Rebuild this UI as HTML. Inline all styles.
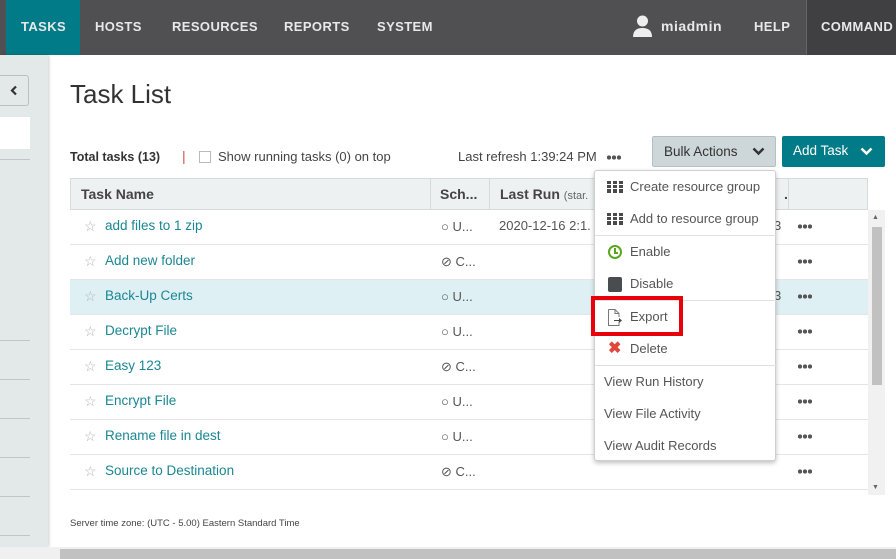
<!DOCTYPE html>
<html><head><style>
*{margin:0;padding:0;box-sizing:border-box}
body{width:896px;height:559px;overflow:hidden;position:relative;font-family:"Liberation Sans",sans-serif;background:#fff;color:#333}
.a{position:absolute}
.nav{left:0;top:0;width:896px;height:55px;background:#505052}
.nv{top:0;height:55px;line-height:53px;color:#e8e8e8;font-weight:bold;font-size:13px;letter-spacing:.4px}
.side{left:0;top:55px;width:48px;height:492px;background:#e3e8e8;box-shadow:1px 0 3px rgba(0,0,0,.2)}
.sl{left:0;width:30px;height:1px;background:#bfc6c7}
.row{left:70px;width:798px;height:35px;border-bottom:1px solid #e3e6e7}
.tn{left:35px;top:8px;color:#1a8792;font-size:13.5px}
.st{left:14px;top:8px;color:#b0b5b7;font-size:14px}
.sc{left:371px;top:9px;font-size:13px;color:#555}
.dt{left:728px;top:14px;width:14px;height:5px;background:radial-gradient(circle at 2px 2.5px,#555 2px,transparent 2.3px) 0 0/5px 5px repeat-x}
.mi{left:0;width:182px;height:32px;line-height:32px;font-size:13px;color:#555}
.mi span{position:absolute;left:35px}
.sep{left:0;width:182px;height:1px;background:#e0e0e0}
.grid{position:absolute;left:12px;top:10px;width:16px;height:12px;background:
repeating-linear-gradient(90deg,#4a4a4a 0 4px,transparent 4px 6px);}
.grid:after{content:"";position:absolute;left:0;top:3px;width:16px;height:1px;background:#fff;box-shadow:0 4px 0 #fff}
</style></head><body>
<div class="a nav"></div>
<div class="a" style="left:6px;top:0;width:74px;height:55px;background:#007b87"></div>
<div class="a nv" style="left:21px">TASKS</div>
<div class="a nv" style="left:95px">HOSTS</div>
<div class="a nv" style="left:172px">RESOURCES</div>
<div class="a nv" style="left:284px">REPORTS</div>
<div class="a nv" style="left:377px">SYSTEM</div>
<svg class="a" style="left:633px;top:15px" width="19" height="23" viewBox="0 0 19 23"><circle cx="9.5" cy="6" r="5.5" fill="#eee"/><path d="M0 22 Q0 13 9.5 13 Q19 13 19 22Z" fill="#eee"/></svg>
<div class="a nv" style="left:661px;font-size:14px;letter-spacing:.5px">miadmin</div>
<div class="a nv" style="left:754px">HELP</div>
<div class="a" style="left:806px;top:0;width:90px;height:55px;background:#404042;border-left:1px solid #666"></div>
<div class="a nv" style="left:821px">COMMAND</div>

<div class="a side"></div>
<div class="a" style="left:-4px;top:75px;width:33px;height:31px;border:1px solid #b9c0c1;border-radius:3px;background:#e3e8e8"></div>
<svg class="a" style="left:10px;top:85px" width="8" height="11" viewBox="0 0 8 11"><path d="M6 1.5L2 5.5l4 4" fill="none" stroke="#333" stroke-width="2.2"/></svg>
<div class="a" style="left:0;top:117px;width:30px;height:32px;background:#fff"></div>
<div class="a sl" style="top:159px"></div><div class="a sl" style="top:340px"></div><div class="a sl" style="top:379px"></div><div class="a sl" style="top:418px"></div><div class="a sl" style="top:457px"></div><div class="a sl" style="top:496px"></div><div class="a sl" style="top:535px"></div>

<div class="a" style="left:70px;top:79px;font-size:26px;color:#333">Task List</div>
<div class="a" style="left:70px;top:150px;font-size:12.5px;font-weight:bold;color:#333">Total tasks (13)</div>
<div class="a" style="left:182px;top:148px;font-size:14px;color:#c55">|</div>
<div class="a" style="left:199px;top:151px;width:12px;height:12px;border:1px solid #bbb"></div>
<div class="a" style="left:218px;top:149px;font-size:13px;color:#444">Show running tasks (0) on top</div>
<div class="a" style="left:458px;top:149px;font-size:13px;color:#444">Last refresh 1:39:24 PM</div>
<div class="a dt" style="left:607px;top:155px"></div>
<div class="a" style="left:652px;top:136px;width:124px;height:31px;background:#cdd6d9;border:1px solid #b5c0c3;border-radius:2px;font-size:13.5px;color:#333;line-height:29px;padding-left:11px">Bulk Actions</div>
<svg class="a" style="left:752px;top:147px" width="13" height="9" viewBox="0 0 13 9"><path d="M1.5 1.5l5 5 5-5" fill="none" stroke="#333" stroke-width="2.5"/></svg>
<div class="a" style="left:782px;top:136px;width:103px;height:31px;background:#007b87;border-radius:2px;font-size:13.5px;color:#fff;line-height:30px;padding-left:11px">Add Task</div>
<svg class="a" style="left:860px;top:147px" width="13" height="9" viewBox="0 0 13 9"><path d="M1.5 1.5l5 5 5-5" fill="none" stroke="#fff" stroke-width="2.5"/></svg>

<div class="a" style="left:70px;top:178px;width:798px;height:32px;background:#eef1f2;border:1px solid #d5dadc"></div>
<div class="a" style="left:430px;top:178px;width:1px;height:32px;background:#d5dadc"></div>
<div class="a" style="left:489px;top:178px;width:1px;height:32px;background:#d5dadc"></div>
<div class="a" style="left:788px;top:178px;width:1px;height:32px;background:#d5dadc"></div>
<div class="a" style="left:81px;top:186px;font-size:14px;font-weight:bold;color:#444">Task Name</div>
<div class="a" style="left:440px;top:186px;font-size:14px;font-weight:bold;color:#444">Sch...</div>
<div class="a" style="left:500px;top:186px;font-size:14px;font-weight:bold;color:#444">Last Run <span style="font-size:11px;font-weight:normal;color:#666">(star.</span></div>
<div class="a" style="left:784px;top:186px;font-size:14px;font-weight:bold;color:#444">.</div>

<div class="a row" style="top:210px"><div class="a st">&#9734;</div><div class="a tn">add files to 1 zip</div><div class="a sc">&#9675; U...</div><div class="a" style="left:429px;top:8px;font-size:13px;color:#555">2020-12-16 2:1.</div><div class="a" style="left:704px;top:8px;font-size:13px;color:#555">3</div><div class="a dt"></div></div>
<div class="a row" style="top:245px"><div class="a st">&#9734;</div><div class="a tn">Add new folder</div><div class="a sc">&#8856; C...</div><div class="a dt"></div></div>
<div class="a row" style="top:280px;background:#dff0f5"><div class="a st">&#9734;</div><div class="a tn">Back-Up Certs</div><div class="a sc">&#9675; U...</div><div class="a" style="left:704px;top:8px;font-size:13px;color:#555">3</div><div class="a dt"></div></div>
<div class="a row" style="top:315px"><div class="a st">&#9734;</div><div class="a tn">Decrypt File</div><div class="a sc">&#9675; U...</div><div class="a dt"></div></div>
<div class="a row" style="top:350px"><div class="a st">&#9734;</div><div class="a tn">Easy 123</div><div class="a sc">&#8856; C...</div><div class="a dt"></div></div>
<div class="a row" style="top:385px"><div class="a st">&#9734;</div><div class="a tn">Encrypt File</div><div class="a sc">&#9675; U...</div><div class="a dt"></div></div>
<div class="a row" style="top:420px"><div class="a st">&#9734;</div><div class="a tn">Rename file in dest</div><div class="a sc">&#9675; U...</div><div class="a dt"></div></div>
<div class="a row" style="top:455px"><div class="a st">&#9734;</div><div class="a tn">Source to Destination</div><div class="a sc">&#8856; C...</div><div class="a dt"></div></div>

<div class="a" style="left:868px;top:210px;width:17px;height:285px;background:#f1f1f1"></div>
<div class="a" style="left:872px;top:227px;width:10px;height:158px;background:#c1c1c1"></div>
<div class="a" style="left:872px;top:214px;font-size:7px;color:#666">&#9650;</div>
<div class="a" style="left:872px;top:484px;font-size:7px;color:#666">&#9660;</div>

<div class="a" style="left:70px;top:518px;font-size:9.5px;color:#444">Server time zone: (UTC - 5.00) Eastern Standard Time</div>

<div class="a" style="left:0;top:547px;width:896px;height:12px;background:#f0f0f0"></div>
<div class="a" style="left:60px;top:549px;width:836px;height:10px;background:#c1c1c1"></div>

<div class="a" style="left:594px;top:170px;width:182px;height:291px;background:#fff;border:1px solid #d0d0d0;border-radius:3px;box-shadow:0 2px 5px rgba(0,0,0,.25)">
<div class="a mi" style="top:0"><div class="grid"></div><span>Create resource group</span></div>
<div class="a mi" style="top:32px"><div class="grid"></div><span>Add to resource group</span></div>
<div class="a sep" style="top:64px"></div>
<div class="a mi" style="top:65px"><div class="a" style="left:13px;top:9px;width:14px;height:14px;border:2px solid #5aa61e;border-radius:50%"></div><div class="a" style="left:19px;top:12px;width:2px;height:5px;background:#5aa61e"></div><div class="a" style="left:19px;top:16px;width:4px;height:2px;background:#5aa61e"></div><span>Enable</span></div>
<div class="a mi" style="top:97px"><div class="a" style="left:13px;top:9px;width:14px;height:15px;background:#4a4d50;border-radius:2px"></div><span>Disable</span></div>
<div class="a sep" style="top:129px"></div>
<div class="a mi" style="top:130px"><svg class="a" style="left:12px;top:8px" width="16" height="17" viewBox="0 0 16 17"><path d="M1.5 .5H8l4 4V8M12 12.5v4H1.5V.5M8 .5v4h4" fill="none" stroke="#777"/><path d="M7 11h5v-2l3 2.5-3 2.5v-2H7z" fill="#444"/></svg><span>Export</span></div>
<div class="a mi" style="top:162px"><span style="left:13px;color:#e2453c;font-weight:bold;font-size:16px">&#x2716;</span><span>Delete</span></div>
<div class="a sep" style="top:194px"></div>
<div class="a mi" style="top:195px"><span style="left:9px">View Run History</span></div>
<div class="a mi" style="top:227px"><span style="left:9px">View File Activity</span></div>
<div class="a mi" style="top:259px"><span style="left:9px">View Audit Records</span></div>
</div>
<div class="a" style="left:591px;top:296px;width:92px;height:40px;border:4px solid #e8000b"></div>
</body></html>
